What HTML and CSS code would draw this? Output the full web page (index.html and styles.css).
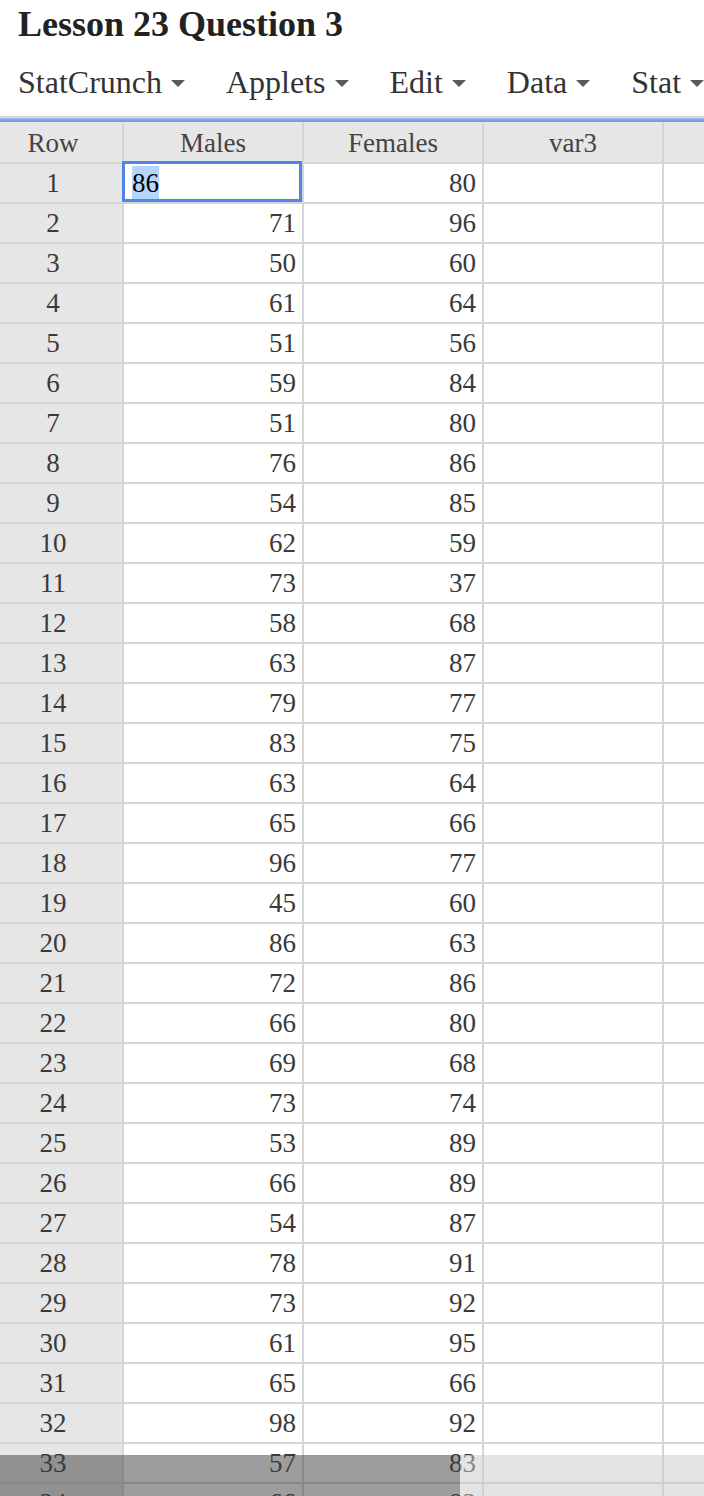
FILE: index.html
```html
<!DOCTYPE html>
<html>
<head>
<meta charset="utf-8">
<link rel="stylesheet" href="styles.css">
</head>
<body>
<div class="page">
  <h1 class="title">Lesson 23 Question 3</h1>
  <nav class="menu">
    <span class="menu-item">StatCrunch<svg class="caret" width="14" height="7" viewBox="0 0 14 7"><path d="M0 0H14L7 7Z"/></svg></span>
    <span class="menu-item">Applets<svg class="caret" width="14" height="7" viewBox="0 0 14 7"><path d="M0 0H14L7 7Z"/></svg></span>
    <span class="menu-item">Edit<svg class="caret" width="14" height="7" viewBox="0 0 14 7"><path d="M0 0H14L7 7Z"/></svg></span>
    <span class="menu-item">Data<svg class="caret" width="14" height="7" viewBox="0 0 14 7"><path d="M0 0H14L7 7Z"/></svg></span>
    <span class="menu-item">Stat<svg class="caret" width="14" height="7" viewBox="0 0 14 7"><path d="M0 0H14L7 7Z"/></svg></span>
  </nav>
  <div class="sheet">
    <div class="band"></div>
    <div class="grid" id="grid">
      <div class="hcell rowhead">Row</div>
      <div class="hcell">Males</div>
      <div class="hcell">Females</div>
      <div class="hcell">var3</div>
      <div class="hcell"></div>
    </div>
  </div>
  <div class="progress">
    <div class="fill"></div>
    <div class="track"></div>
  </div>
</div>
<script>
  var males = [86,71,50,61,51,59,51,76,54,62,73,58,63,79,83,63,65,96,45,86,72,66,69,73,53,66,54,78,73,61,65,98,57,66,70];
  var females = [80,96,60,64,56,84,80,86,85,59,37,68,87,77,75,64,66,77,60,63,86,80,68,74,89,89,87,91,92,95,66,92,83,83,71];
  var g = document.getElementById('grid');
  var html = '';
  for (var i = 0; i < males.length; i++) {
    html += '<div class="cell rownum">' + (i + 1) + '</div>';
    if (i === 0) {
      html += '<div class="cell selected"><span class="sel">' + males[i] + '</span></div>';
    } else {
      html += '<div class="cell num">' + males[i] + '</div>';
    }
    html += '<div class="cell num">' + females[i] + '</div>';
    html += '<div class="cell"></div><div class="cell"></div>';
  }
  g.insertAdjacentHTML('beforeend', html);
</script>
</body>
</html>
```
FILE: styles.css
```css
html, body {
  margin: 0;
  padding: 0;
  background: #fff;
}
body {
  font-family: "Liberation Serif", "Times New Roman", serif;
  color: #333;
}
.page {
  position: relative;
  width: 704px;
  height: 1496px;
  overflow: hidden;
}
.title {
  margin: 0;
  padding: 4px 0 0 18px;
  font-size: 36px;
  line-height: 40px;
  font-weight: bold;
  color: #222;
}
.menu {
  display: flex;
  margin-top: 18px;
  padding-left: 18px;
  font-size: 32px;
  line-height: 40px;
  white-space: nowrap;
  color: #333;
}
.menu-item {
  margin-right: 41px;
  flex: none;
}
.caret {
  margin-left: 9px;
  vertical-align: 6px;
  fill: #5a5a5a;
}
.sheet {
  margin-top: 14px;
  width: 900px;
}
.band {
  height: 6px;
  background: linear-gradient(to bottom, #d8d8d8 0, #d8d8d8 2px, #a9c0ef 2px, #8aa9eb 3px, #6f95e6 6px);
}
.grid {
  display: grid;
  grid-template-columns: 122px 178px 178px 178px 178px;
  grid-auto-rows: 38px;
  grid-template-rows: 40px;
  column-gap: 2px;
  row-gap: 2px;
  background: #d5d5d5;
  font-size: 27px;
}
.hcell {
  background: #e6e6e6;
  color: #444;
  text-align: center;
  line-height: 42px;
}
.rowhead {
  padding-right: 16px;
}
.cell {
  background: #fff;
  line-height: 38px;
  color: #3a3a3a;
}
.rownum {
  background: #e6e6e6;
  text-align: center;
  padding-right: 16px;
}
.num {
  text-align: right;
  padding-right: 6px;
}
.selected {
  position: relative;
  padding-left: 8px;
  color: #000;
}
.selected::after {
  content: "";
  position: absolute;
  left: -2px;
  top: -3px;
  right: 0;
  bottom: 0;
  border: 3px solid #4f86e6;
}
.sel {
  background: #b4d5fe;
  padding: 2px 0;
}
.progress {
  position: absolute;
  left: 0;
  right: 0;
  bottom: 0;
  height: 41px;
  display: flex;
}
.fill {
  width: 460px;
  background: rgba(60, 60, 60, 0.5);
}
.track {
  flex: 1;
  background: rgba(204, 204, 204, 0.52);
}
```
